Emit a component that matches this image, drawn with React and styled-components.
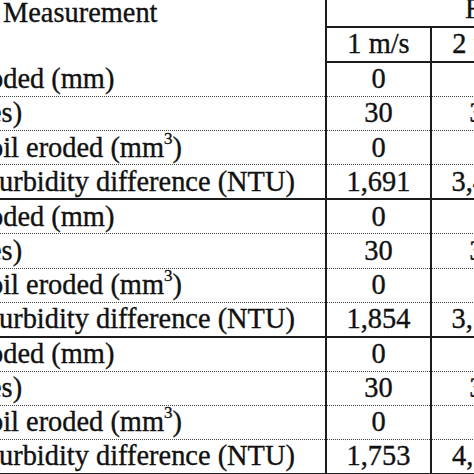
import React from "react";
import styled, {createGlobalStyle} from "styled-components";

const GlobalStyle = createGlobalStyle`
  html, body {
    margin: 0;
    padding: 0;
    background: #ffffff;
  }
  body {
    font-family: "Liberation Serif", "Times New Roman", serif;
    overflow: hidden;
  }
`;

const Frame = styled.div`
  width: 474px;
  height: 474px;
  overflow: hidden;
  background: #ffffff;
`;

const Table = styled.table`
  margin: -7px 0 0 -11px;
  border-collapse: collapse;
  table-layout: fixed;
  width: 771px;
  font-size: 28.4px;
  color: #111111;
  -webkit-text-stroke: 0.35px #111111;
`;

const Col = styled.col`
  width: ${props => props.$w}px;
`;

const HeadCell = styled.th`
  font-weight: normal;
  height: 33px;
  padding: 0;
  line-height: 1;
  text-align: ${props => props.$align || "center"};
  vertical-align: ${props => props.$valign || "middle"};
  padding-left: ${props => props.$pad || 0}px;
  padding-top: ${props => props.$top || 0}px;
  border-right: ${props => props.$right ? "2px solid #1c1c1c" : "none"};
  border-bottom: ${props => props.$bottom ? "2px solid #1c1c1c" : "none"};
  white-space: nowrap;
`;

const Cell = styled.td`
  height: 33.1px;
  padding: 0;
  line-height: 1;
  text-align: ${props => props.$align || "center"};
  padding-left: ${props => props.$indent || 0}px;
  border-right: 2px solid #1c1c1c;
  border-bottom: ${props => props.$end ? "2px solid #1c1c1c" : "1px dotted #444444"};
  white-space: nowrap;
  overflow: hidden;
`;

const Sup = styled.sup`
  font-size: 0.6em;
  line-height: 0;
  vertical-align: 0.75em;
`;

const widths = [337, 105, 105, 105, 119];

const speeds = ["1 m/s", "2 m/s", "3 m/s", "4 m/s"];

const groups = [
    [["0", "30", "0", "1,691"], ["0", "30", "0", "3,402"], ["0.5", "26", "410", "5,118"], ["1.5", "21", "1,230", "7,604"]],
    [["0", "30", "0", "1,854"], ["0", "30", "0", "3,517"], ["0.5", "25", "430", "5,362"], ["2", "20", "1,640", "7,915"]],
    [["0", "30", "0", "1,753"], ["0", "30", "0", "4,116"], ["1", "24", "820", "5,874"], ["2", "19", "1,640", "8,230"]],
];

const labels = [
    {text: "oded (mm)", indent: 0},
    {text: "es)", indent: 0},
    {text: <>oil eroded (mm<Sup>3</Sup>)</>, indent: 0},
    {text: "urbidity difference (NTU)", indent: 10},
];

export default function App() {
    return (
        <Frame>
            <GlobalStyle/>
            <Table>
                <colgroup>
                    {widths.map((w, i) => <Col key={i} $w={w}/>)}
                </colgroup>
                <thead>
                    <tr>
                        <HeadCell rowSpan={2} $align="left" $valign="top" $pad={14} $top={6} $right>
                            Measurement
                        </HeadCell>
                        <HeadCell colSpan={4} $bottom>Flow velocity</HeadCell>
                    </tr>
                    <tr>
                        {speeds.map(s => (
                            <HeadCell key={s} $right $bottom>{s}</HeadCell>
                        ))}
                    </tr>
                </thead>
                <tbody>
                    {groups.map((group, g) =>
                        labels.map((label, i) => (
                            <tr key={`${g}-${i}`}>
                                <Cell $align="left" $indent={label.indent} $end={i === 3}>
                                    {label.text}
                                </Cell>
                                {group.map((col, c) => (
                                    <Cell key={c} $end={i === 3}>{col[i]}</Cell>
                                ))}
                            </tr>
                        ))
                    )}
                </tbody>
            </Table>
        </Frame>
    );
}
